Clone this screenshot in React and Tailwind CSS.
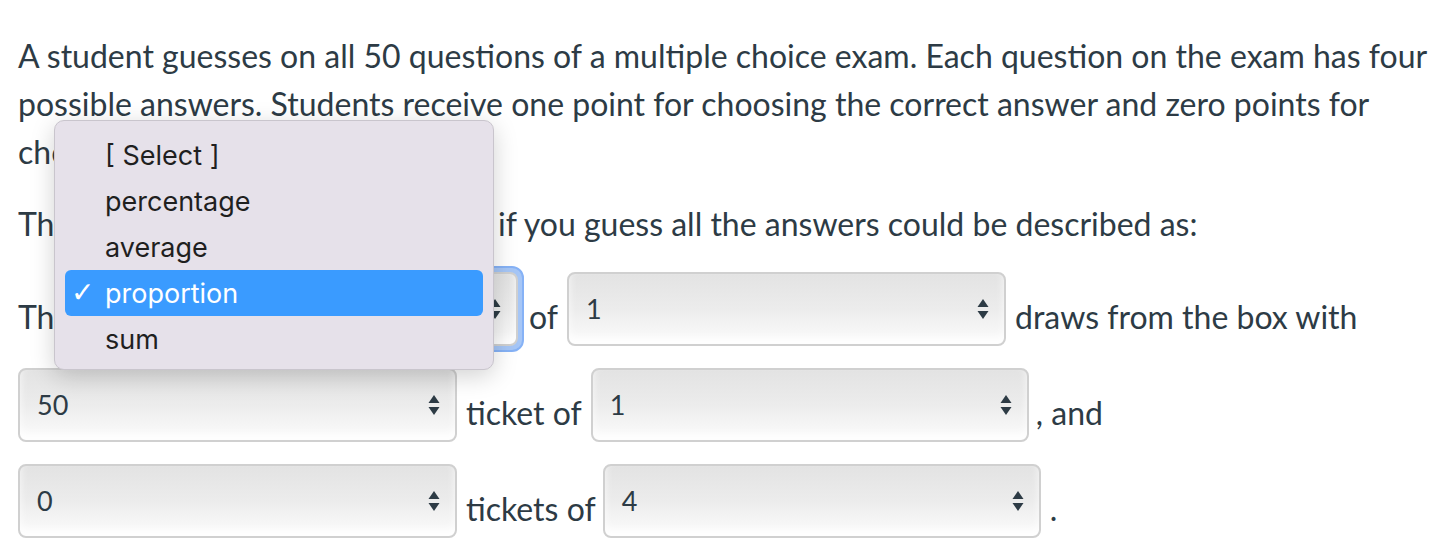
import React from "react";

function Arrows() {
  return (
    <svg width="12" height="22" viewBox="0 0 12 22" className="shrink-0">
      <path d="M0.5 9 L6 1 L11.5 9 Z" fill="#2d3b45" />
      <path d="M0.5 13 L6 21 L11.5 13 Z" fill="#2d3b45" />
    </svg>
  );
}

function Sel({ value, w = "w-[439px]" }) {
  return (
    <div
      className={`${w} h-[74px] shrink-0 flex items-center justify-between pl-[17px] pr-[15px] rounded-[8px] border-2 border-[#d0d0d0] bg-gradient-to-b from-[#e3e3e3] via-[#ececec] to-[#fcfcfc] shadow-[inset_0_-6px_8px_rgba(255,255,255,0.8)] text-[27px] leading-none text-[#2d3b45]`}
    >
      <span className="-mt-[2px]">{value}</span>
      <Arrows />
    </div>
  );
}

export default function App() {
  const items = ["[ Select ]", "percentage", "average", "proportion", "sum"];
  return (
    <div className="relative min-h-[550px] bg-white pl-[18px] pr-[8px] pt-[32px] text-[#2d3b45] font-['Lato',sans-serif] text-[32px] leading-[48px]">
      <p className="whitespace-nowrap">
        A student guesses on all 50 questions of a multiple choice exam. Each question on the exam has four
        <br />
        possible answers. Students receive one point for choosing the correct answer and zero points for
        <br />
        choosing the wrong answer.
      </p>

      <p className="mt-[24px] flex whitespace-nowrap">
        <span className="w-[480px] overflow-hidden">The expected value of your score</span>
        <span>if you guess all the answers could be described as:</span>
      </p>

      <div className="mt-[24px]">
        <div className="flex items-start h-[96px]">
          <span className="mt-[21px] w-[60px]">The</span>
          <div className="rounded-[12px] -mt-[6px] w-[446px] p-[4px] border-[2px] border-[#86b2f6] bg-[#a6c6f6]">
            <Sel value="proportion" w="w-[434px]" />
          </div>
          <span className="mt-[21px] ml-[5px]">of</span>
          <Sel value="1" w="w-[439px] ml-[9px]" />
          <span className="mt-[21px] ml-[9px]">draws from the box with</span>
        </div>
        <div className="flex items-start h-[96px] gap-[9px]">
          <Sel value="50" />
          <span className="mt-[21px]">ticket of</span>
          <Sel value="1" w="w-[438px]" />
          <span className="mt-[21px] -ml-[2px]">, and</span>
        </div>
        <div className="flex items-start h-[96px] gap-[9px]">
          <Sel value="0" />
          <span className="mt-[21px] -mr-[2px]">tickets of</span>
          <Sel value="4" w="w-[438px]" />
          <span className="mt-[21px]">.</span>
        </div>
      </div>

      <div className="absolute left-[54px] top-[120px] w-[440px] h-[250px] rounded-[10px] border border-[#c9c5cd] bg-[#e6e1ea] shadow-[0_6px_24px_rgba(0,0,0,0.18)] pt-[11px] px-[10px] font-['Inter',sans-serif] text-[27px] text-[#1f1f1f]">
        {items.map((it) => {
          const active = it === "proportion";
          return (
            <div
              key={it}
              className={`h-[46px] flex items-center rounded-[6px] ${active ? "bg-[#3a9bff] text-white" : ""}`}
            >
              <span className="w-[40px] pl-[6px] text-[28px] font-bold leading-none font-['DejaVu_Sans',sans-serif]">
                {active ? "✓" : ""}
              </span>
              <span className="leading-none">{it}</span>
            </div>
          );
        })}
      </div>
    </div>
  );
}
